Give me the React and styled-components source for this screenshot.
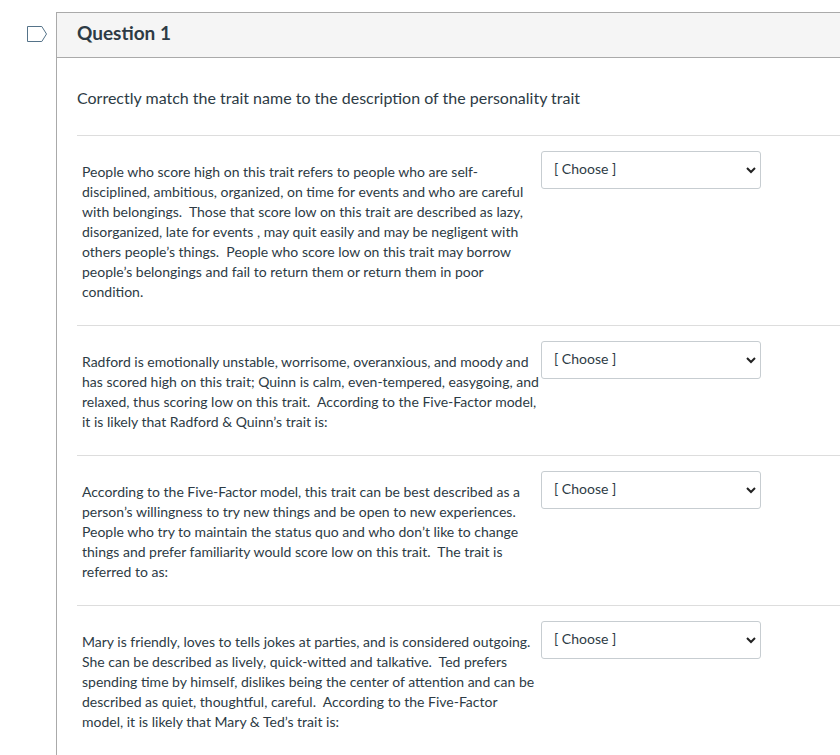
import React, { useState } from 'react';
import styled, { createGlobalStyle } from 'styled-components';

const questions = [
  {
    id: 'conscientiousness',
    text: 'People who score high on this trait refers to people who are self-disciplined, ambitious, organized, on time for events and who are careful with belongings.\u00a0 Those that score low on this trait are described as lazy, disorganized, late for events , may quit easily and may be negligent with others people’s things.\u00a0 People who score low on this trait may borrow people’s belongings and fail to return them or return them in poor condition.',
  },
  {
    id: 'neuroticism',
    text: 'Radford is emotionally unstable, worrisome, overanxious, and moody and has scored high on this trait; Quinn is calm, even-tempered, easygoing, and relaxed, thus scoring low on this trait.\u00a0 According to the Five-Factor model, it is likely that Radford & Quinn’s trait is:',
  },
  {
    id: 'openness',
    text: 'According to the Five-Factor model, this trait can be best described as a person’s willingness to try new things and be open to new experiences.\u00a0 People who try to maintain the status quo and who don’t like to change things and prefer familiarity would score low on this trait.\u00a0 The trait is referred to as:',
  },
  {
    id: 'extraversion',
    text: 'Mary is friendly, loves to tells jokes at parties, and is considered outgoing.\u00a0 She can be described as lively, quick-witted and talkative.\u00a0 Ted prefers spending time by himself, dislikes being the center of attention and can be described as quiet, thoughtful, careful.\u00a0 According to the Five-Factor model, it is likely that Mary & Ted’s trait is:',
  },
];

const traits = ['Conscientiousness', 'Neuroticism', 'Openness', 'Extraversion', 'Agreeableness'];

const App = () => {
  const [answers, setAnswers] = useState({})
  const [flagged, setFlagged] = useState(false)

  const onChange = evt => {
    const { name, value } = evt.target
    setAnswers({...answers, [name]: value})
  }

  return (
    <Page>
      <GlobalStyle />
      <FlagButton
        aria-label='Flag question'
        aria-pressed={flagged}
        onClick={() => setFlagged(!flagged)}
      >
        <svg width='22' height='18' viewBox='0 0 22 18'>
          <path
            d='M1.5 1.5 H15.8 L20.5 9 L15.8 16.5 H1.5 Z'
            fill={flagged ? '#fc5e13' : '#fff'}
            stroke='#557389'
          />
        </svg>
      </FlagButton>
      <Question>
        <Header>
          <Title>Question 1</Title>
        </Header>
        <Body>
          <Prompt>Correctly match the trait name to the description of the personality trait</Prompt>
          {questions.map(({ id, text }) => (
            <Row key={id}>
              <Description htmlFor={id}>{text}</Description>
              <SelectBox>
                <Select id={id} name={id} value={answers[id] || ''} onChange={onChange}>
                  <option value=''>[ Choose ]</option>
                  {traits.map(trait => <option key={trait} value={trait}>{trait}</option>)}
                </Select>
                <Chevron width='10' height='8' viewBox='0 0 10 8'>
                  <path d='M1 2 L5 6 L9 2' fill='none' stroke='#222' strokeWidth='2' />
                </Chevron>
              </SelectBox>
            </Row>
          ))}
        </Body>
      </Question>
    </Page>
  );
}

export default App

const GlobalStyle = createGlobalStyle`
  * {
    box-sizing: border-box;
  }

  body {
    margin: 0;
    background-color: #fff;
    color: #2d3b45;
    font-family: Lato, 'Liberation Sans', sans-serif;
  }
`

const Page = styled.main`
  display: flex;
  min-height: 100vh;
  padding-top: 12px;
`

const FlagButton = styled.button`
  display: flex;
  flex: none;
  align-self: flex-start;
  width: 56px;
  padding: 13px 0 0 26px;
  border: 0;
  background: none;
  cursor: pointer;
`

const Question = styled.section`
  flex: 1;
  min-width: 0;
  border-top: 1px solid #aaa;
  border-left: 1px solid #aaa;
`

const Header = styled.header`
  padding: 6px 20px 10px;
  background-color: #f5f5f5;
  border-bottom: 1px solid #aaa;
`

const Title = styled.h1`
  margin: 0;
  font-size: 19px;
  font-weight: 700;
  line-height: 28px;
`

const Body = styled.div`
  padding: 28px 0 0 20px;
`

const Prompt = styled.p`
  margin: 0 0 25px;
  font-size: 16px;
  line-height: 24px;
`

const Row = styled.div`
  display: flex;
  align-items: flex-start;
  padding: 15px 0 23px 5px;
  border-top: 1px solid #ddd;
`

const Description = styled.label`
  flex: none;
  width: 459px;
  padding-top: 11px;
  font-size: 14px;
  line-height: 20px;
`

const SelectBox = styled.div`
  position: relative;
  width: 220px;
`

const Select = styled.select`
  display: block;
  width: 100%;
  height: 38px;
  padding: 0 28px 3px 12px;
  appearance: none;
  background-color: #fff;
  border: 1px solid #c7cdd1;
  border-radius: 3px;
  color: inherit;
  font-family: inherit;
  font-size: 14px;
`

const Chevron = styled.svg`
  position: absolute;
  top: 15px;
  right: 5px;
  pointer-events: none;
`
